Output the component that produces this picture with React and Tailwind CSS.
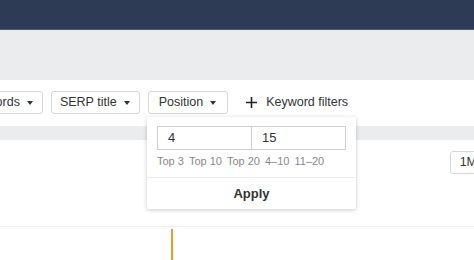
import React from "react";

const Caret = () => (
  <svg width="6" height="4" viewBox="0 0 6 4" className="shrink-0">
    <path d="M0 0h6L3 4z" fill="#333" />
  </svg>
);

function FilterButton({ label, className = "pr-[9px]" }) {
  return (
    <div
      className={`flex h-[23px] items-center gap-[7px] rounded-[3px] border border-[#d6d6d6] bg-white pl-[8px] text-[12.5px] text-[#333] ${className}`}
    >
      <span>{label}</span>
      <Caret />
    </div>
  );
}

export default function App() {
  const quick = ["Top 3", "Top 10", "Top 20", "4–10", "11–20"];
  return (
    <div
      className="relative h-[260px] w-[474px] overflow-hidden bg-white"
      style={{ fontFamily: '"Liberation Sans", Arial, sans-serif' }}
    >
      <div className="h-[30px] border-b border-[#4a5870] bg-[#2e3b55]" />
      <div className="h-[50px] bg-[#ebecee]" />
      <div className="flex h-[46px] items-start pt-[11px]">
        <div className="ml-[-44px] flex items-center gap-[8px]">
          <FilterButton label="Keywords" />
          <FilterButton label="SERP title" />
          <FilterButton label="Position" className="pl-[10px] pr-[11px]" />
          <div className="ml-[10px] flex items-center gap-[9px] text-[12.5px] text-[#333]">
            <svg width="11" height="11" viewBox="0 0 11 11">
              <path d="M5.5 0v11M0 5.5h11" stroke="#222" strokeWidth="1.6" />
            </svg>
            <span>Keyword filters</span>
          </div>
        </div>
      </div>
      <div className="h-[14px] bg-[#ebecee]" />
      <div className="flex justify-end pt-[11px]">
        <div className="mr-[-24px] flex h-[23px] items-center rounded-[3px] border border-[#d6d6d6] pl-[9px] pr-[20px] text-[12.5px] text-[#333]">
          1M
        </div>
      </div>
      <div className="mt-[52px] h-px bg-[#efefef]" />
      <div className="ml-[171px] mt-[2px] h-[40px] w-[2px] bg-[#f39a1e]" />

      <div className="absolute left-[147px] top-[117px] w-[209px] rounded-[2px] bg-white shadow-[0_1px_4px_rgba(0,0,0,0.22)]">
        <div className="px-[10px] pt-[9px]">
          <div className="flex h-[24px] border border-[#cfcfcf]">
            <div className="flex flex-1 items-center border-r border-[#cfcfcf] pl-[10px] text-[13px] text-[#333]">
              4
            </div>
            <div className="flex flex-1 items-center pl-[10px] text-[13px] text-[#333]">
              15
            </div>
          </div>
          <div className="flex h-[22px] items-center gap-[5px] text-[11px] text-[#888]">
            {quick.map((q) => (
              <span key={q}>{q}</span>
            ))}
          </div>
        </div>
        <div className="mt-[5px] border-t border-[#ebebeb]" />
        <div className="flex h-[31px] items-center justify-center text-[13px] font-bold text-[#333]">
          Apply
        </div>
      </div>
    </div>
  );
}
